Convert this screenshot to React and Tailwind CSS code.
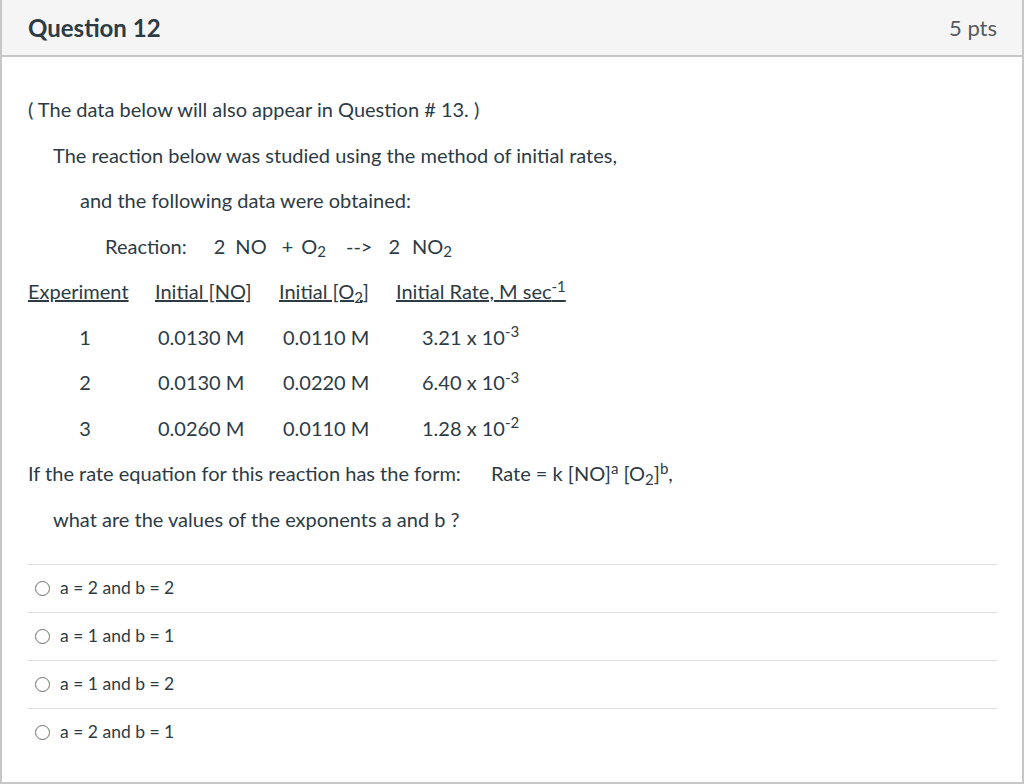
export default function App() {
  const rows = [
    ["1", "0.0130 M", "0.0110 M", "3.21 x 10", "-3"],
    ["2", "0.0130 M", "0.0220 M", "6.40 x 10", "-3"],
    ["3", "0.0260 M", "0.0110 M", "1.28 x 10", "-2"],
  ];
  const answers = ["a = 2 and b = 2", "a = 1 and b = 1", "a = 1 and b = 2", "a = 2 and b = 1"];
  const sub = "text-[15px]";
  return (
    <div className="w-[1024px] h-[784px] bg-white" style={{ fontFamily: "Lato, 'Noto Sans', sans-serif" }}>
      <div className="h-[784px] border-2 border-t-0 border-[#c7c7c7] flex flex-col">
        <div className="h-[57px] bg-[#f5f5f5] border-b-2 border-[#c7c7c7] flex items-center justify-between pl-[26px] pr-[25px]">
          <div className="text-[24px] font-bold text-[#2d3b45]">Question 12</div>
          <div className="text-[22px] text-[#555b60]">5 pts</div>
        </div>
        <div className="pl-[26px] pr-[25px] pt-[37px] text-[20px] leading-[30px] text-[#2d3b45]">
          <p className="mb-[15.5px]">( The data below will also appear in Question # 13. )</p>
          <p className="mb-[15.5px] pl-[25px]">The reaction below was studied using the method of initial rates,</p>
          <p className="mb-[15.5px] pl-[52px]">and the following data were obtained:</p>
          <p className="mb-[15.5px] pl-[77px] whitespace-nowrap">
            <span>Reaction:</span>
            <span className="ml-[27px]">2</span>
            <span className="ml-[10px]">NO</span>
            <span className="ml-[15px]">+</span>
            <span className="ml-[8px]">O<sub className={sub}>2</sub></span>
            <span className="ml-[20px]">--&gt;</span>
            <span className="ml-[16px]">2</span>
            <span className="ml-[12px]">NO<sub className={sub}>2</sub></span>
          </p>
          <div className="grid grid-cols-[127px_124px_117px_auto]">
            <div className="mb-[15.5px] underline">Experiment</div>
            <div className="mb-[15.5px] underline">Initial [NO]</div>
            <div className="mb-[15.5px] underline">Initial [O<sub className={sub}>2</sub>]</div>
            <div className="mb-[15.5px] underline">Initial Rate, M sec<sup className={sub}>-1</sup></div>
            {rows.map((r) => [
              <div key={r[0] + "a"} className="mb-[15.5px] w-[114px] text-center">{r[0]}</div>,
              <div key={r[0] + "b"} className="mb-[15.5px] pl-[3px]">{r[1]}</div>,
              <div key={r[0] + "c"} className="mb-[15.5px] pl-[4px]">{r[2]}</div>,
              <div key={r[0] + "d"} className="mb-[15.5px] pl-[26px]">{r[3]}<sup className={sub}>{r[4]}</sup></div>,
            ])}
          </div>
          <p className="mb-[15.5px] whitespace-nowrap">
            <span>If the rate equation for this reaction has the form:</span>
            <span className="ml-[30px]">Rate = k [NO]<sup className={sub}>a</sup> [O<sub className={sub}>2</sub>]<sup className={sub}>b</sup>,</span>
          </p>
          <p className="pl-[25px]">what are the values of the exponents a and b ?</p>
          <div className="mt-[30px]">
            {answers.map((a, i) => (
              <div key={i} className="h-[48px] flex items-center border-t border-[#dcdcdc]">
                <span className="ml-[7px] w-[15px] h-[15px] rounded-full border border-[#6c6c6c] bg-white"></span>
                <span className="ml-[10px] text-[17.5px] text-[#2d3b45]">{a}</span>
              </div>
            ))}
          </div>
        </div>
      </div>
    </div>
  );
}
